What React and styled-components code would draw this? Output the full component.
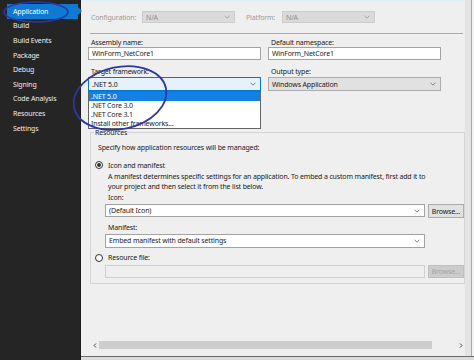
import React from "react";
import styled, { createGlobalStyle, css } from "styled-components";

const GlobalStyle = createGlobalStyle`
  html, body { margin: 0; padding: 0; background: #efefef; }
  body {
    font-family: "Noto Sans", "DejaVu Sans", sans-serif;
    font-size: 7px;
    line-height: 9px;
    letter-spacing: -0.15px;
    color: #1a1a1a;
  }
  * { box-sizing: border-box; }
`;

const Window = styled.div`
  position: relative;
  width: 474px;
  height: 360px;
  display: flex;
  overflow: hidden;
  background: #efefef;
`;

const Sidebar = styled.nav`
  position: relative;
  z-index: 2;
  width: 81px;
  flex: none;
  background: #252526;
  border-right: 1px solid #1c1c1d;
  padding-top: 4px;
  display: flex;
  flex-direction: column;
`;

const NavItem = styled.div`
  position: relative;
  height: 14.6px;
  display: flex;
  align-items: center;
  padding-left: 13px;
  color: #ececec;
  white-space: nowrap;
  ${(p) =>
    p.$active &&
    css`
      margin: 0 2px 0 7px;
      padding-left: 6px;
      background: #0e7ad3;
      color: #fff;
      &::after {
        content: "";
        position: absolute;
        right: -4px;
        top: 50%;
        transform: translateY(-50%);
        border-left: 4px solid #0e7ad3;
        border-top: 4px solid transparent;
        border-bottom: 4px solid transparent;
      }
    `}
`;

const Main = styled.div`
  flex: 1;
  min-width: 0;
  display: flex;
  flex-direction: column;
`;

const Body = styled.div`
  flex: 1;
  min-height: 0;
  display: flex;
`;

const Panel = styled.div`
  width: 384px;
  flex: none;
  display: flex;
  flex-direction: column;
  border-top: 2px solid #dff1f6;
  padding-left: 7px;
  background: #efefef;
`;

const Edge = styled.div`
  flex: 1;
  background: linear-gradient(
    to right,
    #e4e4e4 0 6px,
    #a9a9a9 6px 7px,
    #f3f3f3 7px
  );
`;

const Footer = styled.div`
  height: 4px;
  flex: none;
  border-top: 1px solid #6a6a6a;
  background: #dcdcdc;
`;

const ConfigRow = styled.div`
  display: flex;
  align-items: center;
  margin-top: 9px;
  height: 12px;
`;

const DimLabel = styled.span`
  flex: none;
  width: ${(p) => p.$w}px;
  padding-left: ${(p) => p.$pl || 0}px;
  margin-left: ${(p) => p.$ml || 0}px;
  color: #9b9b9b;
  white-space: nowrap;
`;

const comboVariants = {
  disabled: css`
    background: #dadada;
    border-color: #cccccc;
    color: #8d8d8d;
  `,
  focus: css`
    background: #e5f1fb;
    border-color: #0078d7;
  `,
  button: css`
    background: #e1e1e1;
    border-color: #adadad;
  `,
  white: css`
    background: #ffffff;
    border-color: #a2a2a2;
  `,
  inactive: css`
    background: #efefef;
    border-color: #cfcfcf;
  `,
};

const Combo = styled.div`
  flex: none;
  width: ${(p) => p.$w}px;
  height: ${(p) => p.$h || 14}px;
  margin-top: ${(p) => p.$mt || 0}px;
  display: flex;
  align-items: center;
  justify-content: space-between;
  padding: 0 4px 0 3px;
  border: 1px solid #acacac;
  white-space: nowrap;
  ${(p) => comboVariants[p.$variant || "white"]}
`;

const Button = styled.div`
  flex: none;
  width: ${(p) => p.$w}px;
  height: ${(p) => p.$h}px;
  display: flex;
  align-items: center;
  justify-content: center;
  border: 1px solid #adadad;
  background: #e1e1e1;
  white-space: nowrap;
  ${(p) =>
    p.$disabled &&
    css`
      background: #cccccc;
      border-color: #bfbfbf;
      color: #a3a3a3;
    `}
`;

const Rule = styled.div`
  margin: 10px 0 0 2px;
  width: 373px;
  height: 1px;
  background: #a9a9a9;
`;

const FieldGrid = styled.div`
  display: grid;
  grid-template-columns: 173px 173px;
  column-gap: 7px;
  row-gap: 7px;
  margin-top: 4px;
`;

const Field = styled.div`
  position: relative;
  display: flex;
  flex-direction: column;
`;

const FieldLabel = styled.div`
  height: 9px;
  padding-left: 3px;
  white-space: nowrap;
`;

const DropList = styled.div`
  position: absolute;
  z-index: 3;
  top: 100%;
  left: 0;
  width: 100%;
  background: #fff;
  border: 1px solid #646464;
  display: flex;
  flex-direction: column;
`;

const DropItem = styled.div`
  height: 9px;
  padding-left: 2px;
  white-space: nowrap;
  ${(p) =>
    p.$selected &&
    css`
      background: #1480e3;
      color: #fff;
    `}
`;

const Group = styled.fieldset`
  margin: 36.5px 0 0 2px;
  width: 375px;
  padding: 0 0 5px 4px;
  border: 1px solid #d4d4d4;
  min-width: 0;
`;

const Legend = styled.legend`
  padding: 0 1px;
  margin-left: -1px;
  line-height: 9px;
`;

const GroupBody = styled.div`
  display: flex;
  flex-direction: column;
`;

const Text = styled.div`
  margin-top: ${(p) => p.$mt || 0}px;
  margin-left: ${(p) => p.$ml || 0}px;
  padding-left: ${(p) => p.$pl || 0}px;
  line-height: ${(p) => p.$lh || 9}px;
  white-space: nowrap;
`;

const RadioRow = styled.label`
  display: flex;
  align-items: center;
  gap: 5px;
  height: 9px;
  margin-top: ${(p) => p.$mt || 0}px;
`;

const Radio = styled.span`
  width: 8px;
  height: 8px;
  flex: none;
  border-radius: 50%;
  border: 1px solid #333;
  background: #fff;
  display: flex;
  align-items: center;
  justify-content: center;
  &::after {
    content: "";
    width: 4px;
    height: 4px;
    border-radius: 50%;
    background: ${(p) => (p.$checked ? "#333" : "transparent")};
  }
`;

const Indent = styled.div`
  margin-left: 10px;
  display: flex;
  flex-direction: column;
`;

const ControlRow = styled.div`
  display: flex;
  gap: 3px;
  margin-top: ${(p) => p.$mt || 0}px;
`;

const Spacer = styled.div`
  flex: 1;
`;

const HScroll = styled.div`
  margin: 0 0 7px 2px;
  width: 375px;
  height: 8px;
  display: flex;
  align-items: center;
`;

const ScrollArrow = styled.div`
  width: 9px;
  height: 8px;
  flex: none;
  display: flex;
  align-items: center;
  justify-content: center;
`;

const Thumb = styled.div`
  width: 333px;
  height: 8px;
  background: #cdcdcd;
`;

const Annot = styled.svg`
  position: absolute;
  left: 0;
  top: 0;
  z-index: 5;
  pointer-events: none;
`;

const Chevron = ({ color = "#707070" }) => (
  <svg width="6" height="4" viewBox="0 0 6 4">
    <polyline points="0.5,0.7 3,3.2 5.5,0.7" fill="none" stroke={color} strokeWidth="0.9" />
  </svg>
);

const Arrow = ({ dir }) => (
  <svg width="4" height="5" viewBox="0 0 4 5">
    <polyline
      points={dir === "left" ? "3,0.5 1,2.5 3,4.5" : "1,0.5 3,2.5 1,4.5"}
      fill="none"
      stroke="#444"
      strokeWidth="1"
    />
  </svg>
);

const navItems = [
  "Application",
  "Build",
  "Build Events",
  "Package",
  "Debug",
  "Signing",
  "Code Analysis",
  "Resources",
  "Settings",
];

export default function App() {
  return (
    <>
      <GlobalStyle />
      <Window>
        <Sidebar>
          {navItems.map((n, i) => (
            <NavItem key={n} $active={i === 0}>
              {n}
            </NavItem>
          ))}
        </Sidebar>
        <Main>
          <Body>
            <Panel>
              <ConfigRow>
                <DimLabel $w={54} $pl={3}>Configuration:</DimLabel>
                <Combo $w={93} $h={12} $variant="disabled">
                  <span>N/A</span>
                  <Chevron color="#a0a0a0" />
                </Combo>
                <DimLabel $w={36} $ml={11}>Platform:</DimLabel>
                <Combo $w={93} $h={12} $variant="disabled">
                  <span>N/A</span>
                  <Chevron color="#a0a0a0" />
                </Combo>
              </ConfigRow>
              <Rule />
              <FieldGrid>
                <Field>
                  <FieldLabel>Assembly name:</FieldLabel>
                  <Combo $w={173} $h={13} $variant="white">WinForm_NetCore1</Combo>
                </Field>
                <Field>
                  <FieldLabel>Default namespace:</FieldLabel>
                  <Combo $w={173} $h={13} $variant="white">WinForm_NetCore1</Combo>
                </Field>
                <Field>
                  <FieldLabel>Target framework:</FieldLabel>
                  <Combo $w={173} $h={14} $mt={1} $variant="focus">
                    <span>.NET 5.0</span>
                    <Chevron />
                  </Combo>
                  <DropList>
                    <DropItem $selected>.NET 5.0</DropItem>
                    <DropItem>.NET Core 3.0</DropItem>
                    <DropItem>.NET Core 3.1</DropItem>
                    <DropItem>Install other frameworks...</DropItem>
                  </DropList>
                </Field>
                <Field>
                  <FieldLabel>Output type:</FieldLabel>
                  <Combo $w={173} $h={14} $mt={1} $variant="button">
                    <span>Windows Application</span>
                    <Chevron />
                  </Combo>
                </Field>
              </FieldGrid>
              <Group>
                <Legend>Resources</Legend>
                <GroupBody>
                  <Text $mt={6} $ml={3}>
                    Specify how application resources will be managed:
                  </Text>
                  <RadioRow $mt={9}>
                    <Radio $checked />
                    <span>Icon and manifest</span>
                  </RadioRow>
                  <Indent>
                    <Text $mt={2.5} $pl={3} $lh={10}>
                      A manifest determines specific settings for an application. To embed a
                      custom manifest, first add it to
                      <br />
                      your project and then select it from the list below.
                    </Text>
                    <Text $mt={0.5} $pl={3}>Icon:</Text>
                    <ControlRow $mt={2.5}>
                      <Combo $w={320} $h={13} $variant="white">
                        <span>(Default Icon)</span>
                        <Chevron />
                      </Combo>
                      <Button $w={36} $h={14}>Browse...</Button>
                    </ControlRow>
                    <Text $mt={5} $pl={3}>Manifest:</Text>
                    <Combo $w={320} $h={14} $mt={1.5} $variant="white">
                      <span>Embed manifest with default settings</span>
                      <Chevron />
                    </Combo>
                  </Indent>
                  <RadioRow $mt={5.5}>
                    <Radio />
                    <span>Resource file:</span>
                  </RadioRow>
                  <Indent>
                    <ControlRow $mt={2.5}>
                      <Combo $w={320} $h={13} $variant="inactive" />
                      <Button $w={36} $h={13} $disabled>Browse...</Button>
                    </ControlRow>
                  </Indent>
                </GroupBody>
              </Group>
              <Spacer />
              <HScroll>
                <ScrollArrow>
                  <Arrow dir="left" />
                </ScrollArrow>
                <Thumb />
                <Spacer />
                <ScrollArrow>
                  <Arrow dir="right" />
                </ScrollArrow>
              </HScroll>
            </Panel>
            <Edge />
          </Body>
          <Footer />
        </Main>
        <Annot width="474" height="360" viewBox="0 0 474 360">
          <ellipse cx="36" cy="12" rx="32" ry="10" fill="none" stroke="#2e36a0" strokeWidth="1.6" />
          <ellipse
            cx="120"
            cy="98"
            rx="47"
            ry="31"
            transform="rotate(-12 120 98)"
            fill="none"
            stroke="#2e36a0"
            strokeWidth="1.8"
          />
        </Annot>
      </Window>
    </>
  );
}
